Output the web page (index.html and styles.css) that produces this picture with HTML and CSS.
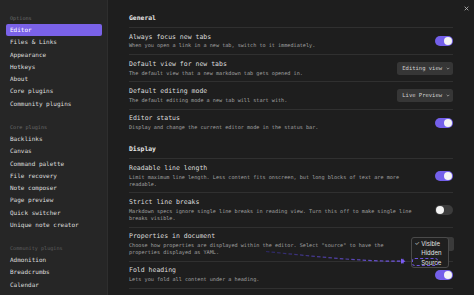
FILE: index.html
```html
<!DOCTYPE html>
<html lang="en">
<head>
<meta charset="utf-8">
<title>Settings - Editor</title>
<link rel="stylesheet" href="styles.css">
</head>
<body>
<div class="modal">
  <nav class="sidebar">
    <div class="group">
      <div class="group-title">Options</div>
      <div class="nav-item active">Editor</div>
      <div class="nav-item">Files &amp; Links</div>
      <div class="nav-item">Appearance</div>
      <div class="nav-item">Hotkeys</div>
      <div class="nav-item">About</div>
      <div class="nav-item">Core plugins</div>
      <div class="nav-item">Community plugins</div>
    </div>
    <div class="group">
      <div class="group-title">Core plugins</div>
      <div class="nav-item">Backlinks</div>
      <div class="nav-item">Canvas</div>
      <div class="nav-item">Command palette</div>
      <div class="nav-item">File recovery</div>
      <div class="nav-item">Note composer</div>
      <div class="nav-item">Page preview</div>
      <div class="nav-item">Quick switcher</div>
      <div class="nav-item">Unique note creator</div>
    </div>
    <div class="group">
      <div class="group-title dim">Community plugins</div>
      <div class="nav-item">Admonition</div>
      <div class="nav-item">Breadcrumbs</div>
      <div class="nav-item">Calendar</div>
    </div>
  </nav>

  <main class="content">
    <div class="heading first">General</div>
    <div class="item">
      <div class="info">
        <div class="name">Always focus new tabs</div>
        <div class="desc">When you open a link in a new tab, switch to it immediately.</div>
      </div>
      <div class="toggle on"><span class="knob"></span></div>
    </div>
    <div class="item">
      <div class="info">
        <div class="name">Default view for new tabs</div>
        <div class="desc">The default view that a new markdown tab gets opened in.</div>
      </div>
      <div class="select"><span>Editing view</span><svg class="chev" viewBox="0 0 6 4"><path d="M1 1 L3 3 L5 1"/></svg></div>
    </div>
    <div class="item">
      <div class="info">
        <div class="name">Default editing mode</div>
        <div class="desc">The default editing mode a new tab will start with.</div>
      </div>
      <div class="select"><span>Live Preview</span><svg class="chev" viewBox="0 0 6 4"><path d="M1 1 L3 3 L5 1"/></svg></div>
    </div>
    <div class="item">
      <div class="info">
        <div class="name">Editor status</div>
        <div class="desc">Display and change the current editor mode in the status bar.</div>
      </div>
      <div class="toggle on"><span class="knob"></span></div>
    </div>

    <div class="heading">Display</div>
    <div class="item">
      <div class="info">
        <div class="name">Readable line length</div>
        <div class="desc">Limit maximum line length. Less content fits onscreen, but long blocks of text are more readable.</div>
      </div>
      <div class="toggle on"><span class="knob"></span></div>
    </div>
    <div class="item">
      <div class="info">
        <div class="name">Strict line breaks</div>
        <div class="desc">Markdown specs ignore single line breaks in reading view. Turn this off to make single line breaks visible.</div>
      </div>
      <div class="toggle"><span class="knob"></span></div>
    </div>
    <div class="item">
      <div class="info">
        <div class="name">Properties in document</div>
        <div class="desc">Choose how properties are displayed within the editor. Select "source" to have the properties displayed as YAML.</div>
      </div>
      <div class="select small"></div>
    </div>
    <div class="item">
      <div class="info">
        <div class="name">Fold heading</div>
        <div class="desc">Lets you fold all content under a heading.</div>
      </div>
      <div class="toggle on"><span class="knob"></span></div>
    </div>
    <div class="item">
      <div class="info">
        <div class="name">Fold indent</div>
      </div>
    </div>
  </main>

  <div class="close" aria-label="Close">
    <svg viewBox="0 0 6 6"><path d="M0.8 0.8 L5.2 5.2 M5.2 0.8 L0.8 5.2"/></svg>
  </div>

  <svg class="annot" viewBox="0 0 474 295" width="474" height="295">
    <defs>
      <linearGradient id="g" gradientUnits="userSpaceOnUse" x1="266" y1="0" x2="405" y2="0">
        <stop offset="0" stop-color="#2b2760"/>
        <stop offset="1" stop-color="#7659ec"/>
      </linearGradient>
    </defs>
    <path class="arrow-line" d="M266 251.5 C 310 256, 360 261.5, 402 261.2"/>
    <path class="arrow-head" d="M401 258.6 L405.5 261.2 L401 263.8 Z"/>
    <path class="arrow-cross" d="M403 258.8 L403 263.6"/>
  </svg>

  <div class="menu">
    <div class="menu-item"><span class="check">✓</span><span>Visible</span></div>
    <div class="menu-item"><span class="check"></span><span>Hidden</span></div>
    <div class="menu-item"><span class="check"></span><span>Source</span></div>
    <span class="focus-ring"></span>
  </div>
</div>
</body>
</html>
```

FILE: styles.css
```css
html, body {
  margin: 0;
  padding: 0;
  background: #1e1e1e;
}

body {
  width: 474px;
  height: 295px;
  overflow: hidden;
}

.modal {
  position: relative;
  display: flex;
  width: 474px;
  height: 295px;
  overflow: hidden;
  background: #1e1e1e;
  font-family: "DejaVu Sans Mono", "Liberation Mono", monospace;
}

/* Sidebar */
.sidebar {
  width: 108px;
  flex: 0 0 108px;
  box-sizing: border-box;
  background: #262626;
  border-right: 1px solid #2e2e2e;
  padding: 11.9px 5px 0 6px;
  display: flex;
  flex-direction: column;
  gap: 10.9px;
}

.group {
  display: flex;
  flex-direction: column;
}

.group-title {
  height: 12.25px;
  line-height: 12.25px;
  font-size: 5.15px;
  color: #6c6c6c;
  padding-left: 4px;
}

.group-title.dim {
  color: #5e5e5e;
}

.nav-item {
  height: 12.25px;
  line-height: 12.25px;
  font-size: 6px;
  color: #dedede;
  padding-left: 4px;
  border-radius: 2px;
  white-space: nowrap;
}

.nav-item.active {
  background: #7a62e8;
  color: #ffffff;
}

/* Content */
.content {
  flex: 1;
  padding: 5.7px 21px 0 21px;
  display: flex;
  flex-direction: column;
  min-width: 0;
}

.heading {
  font-size: 6.4px;
  line-height: 9px;
  font-weight: bold;
  color: #e6e6e6;
  padding: 9.2px 0 4.2px;
  border-bottom: 1px solid #303030;
}

.heading.first {
  padding-top: 8.8px;
  padding-bottom: 3.5px;
}

.item {
  display: flex;
  align-items: center;
  padding: 4.6px 0;
  flex-shrink: 0;
}

.item + .item {
  border-top: 1px solid #303030;
}

.info {
  flex: 1;
  min-width: 0;
  margin-right: 14px;
}

.name {
  font-size: 6.5px;
  line-height: 9px;
  color: #dcdcdc;
  white-space: nowrap;
}

.desc {
  font-size: 5.16px;
  line-height: 7.1px;
  color: #a2a2a2;
  margin-top: 0.9px;
}

/* Toggle */
.toggle {
  position: relative;
  width: 18px;
  height: 10px;
  border-radius: 5px;
  background: #3c3c3c;
  flex: 0 0 18px;
}

.toggle.on {
  background: #7460ea;
}

.knob {
  position: absolute;
  top: 1px;
  left: 1px;
  width: 8px;
  height: 8px;
  border-radius: 50%;
  background: #f4f4f4;
}

.toggle.on .knob {
  left: 9px;
}

/* Select */
.select {
  width: 56px;
  height: 13px;
  box-sizing: border-box;
  flex: 0 0 56px;
  background: #363636;
  border-radius: 2.5px;
  padding: 0 3px 0 5.3px;
  display: flex;
  align-items: center;
  justify-content: space-between;
  font-size: 5.5px;
  color: #cfcfcf;
  white-space: nowrap;
}

.select.small {
  width: 42.5px;
  flex: 0 0 42.5px;
  height: 14px;
  margin-right: -1px;
  background: #3a3a3a;
}

.chev {
  width: 4px;
  height: 3px;
  fill: none;
  stroke: #bdbdbd;
  stroke-width: 1;
}

/* Close */
.close {
  position: absolute;
  left: 463.5px;
  top: 5.5px;
  width: 5px;
  height: 5px;
}

.close svg {
  display: block;
  width: 5px;
  height: 5px;
  fill: none;
  stroke: #b8b8b8;
  stroke-width: 1;
}

/* Annotation arrow */
.annot {
  position: absolute;
  left: 0;
  top: 0;
  pointer-events: none;
}

.arrow-line {
  fill: none;
  stroke: url(#g);
  stroke-width: 1.2;
  stroke-dasharray: 3.5 2.2;
}

.arrow-head {
  fill: #7a5cf0;
}

.arrow-cross {
  stroke: #7a5cf0;
  stroke-width: 1;
}

/* Dropdown menu */
.menu {
  position: absolute;
  left: 410.7px;
  top: 236.7px;
  width: 38.6px;
  height: 31.6px;
  box-sizing: border-box;
  padding: 1px 0 0 3px;
  background: #1f1f1f;
  border: 1px solid #4a4a4a;
  border-radius: 3px;
  font-family: Inter, "Noto Sans", sans-serif;
  font-size: 6px;
  color: #e2e2e2;
}

.menu-item {
  display: flex;
  align-items: center;
  height: 9.5px;
  line-height: 9.5px;
}

.check {
  width: 6.5px;
  flex: 0 0 6.5px;
  font-size: 5.5px;
}

.focus-ring {
  position: absolute;
  left: 0.5px;
  top: 20px;
  width: 26px;
  height: 8.3px;
  box-sizing: border-box;
  border: 1px dashed #6d55e0;
  border-radius: 3px;
}
```
